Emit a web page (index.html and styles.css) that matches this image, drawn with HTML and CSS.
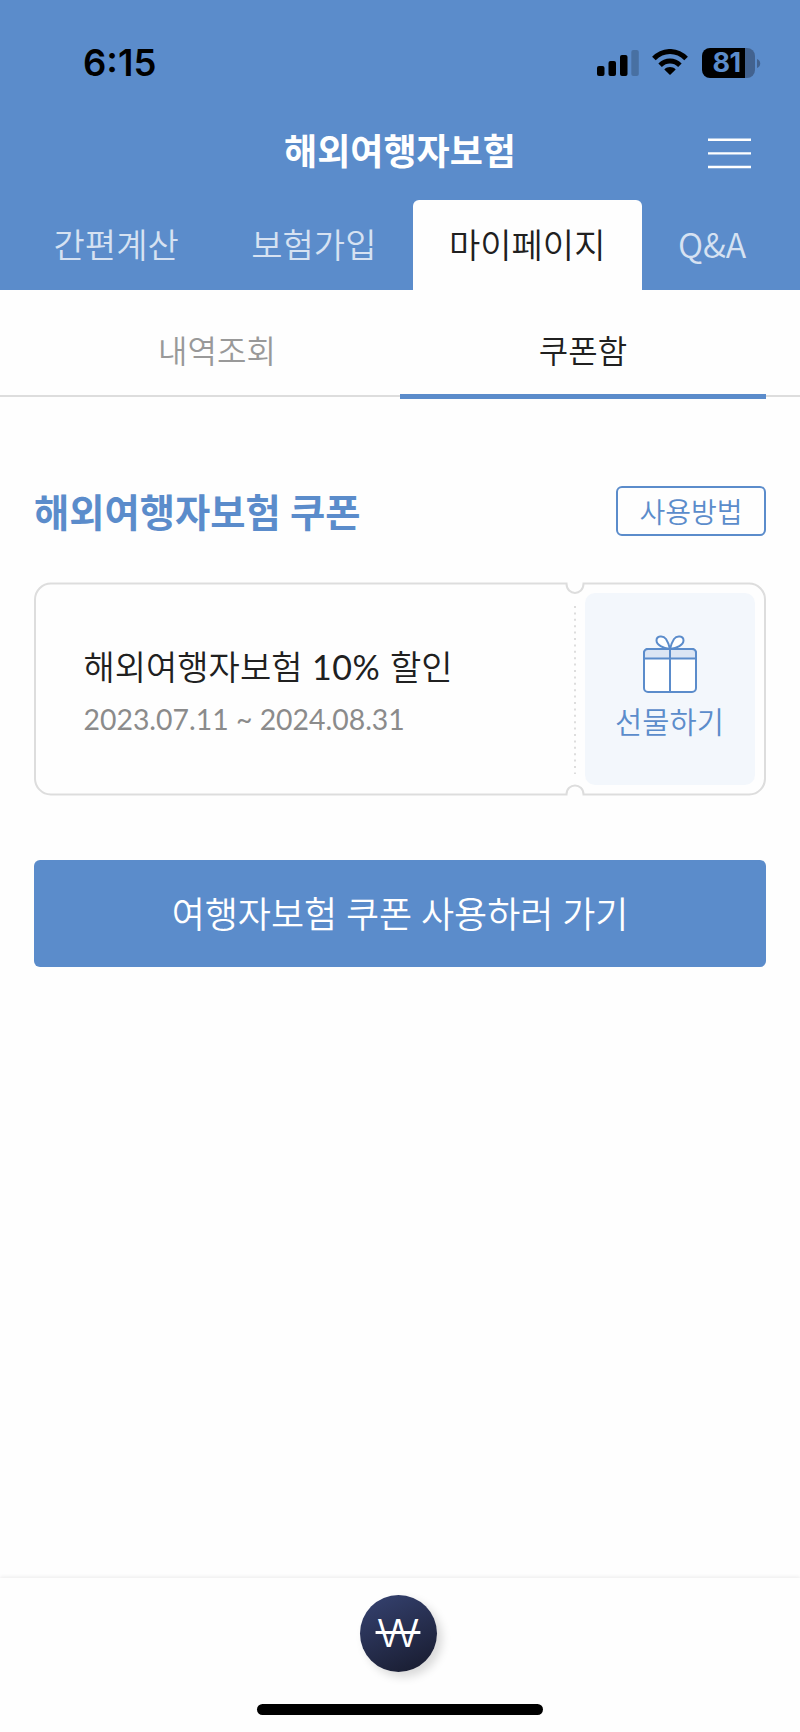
FILE: index.html
```html
<!DOCTYPE html>
<html lang="ko">
<head>
<meta charset="utf-8">
<title>해외여행자보험</title>
<link rel="stylesheet" href="styles.css">
</head>
<body>
<div class="screen">
  <header class="header">
    <div class="status">
      <span class="time">6:15</span>
      <div class="indicators">
        <svg class="signal" width="42" height="27" viewBox="0 0 42 27">
          <rect x="0" y="16" width="7.5" height="10" rx="2"/><rect x="11.5" y="11" width="7.5" height="15" rx="2"/><rect x="23" y="5" width="7.5" height="21" rx="2"/><rect x="34.3" y="0" width="7.5" height="26" rx="2" opacity=".2"/>
        </svg>
        <svg class="wifi" width="36" height="27" viewBox="0 0 36 27" fill="none" stroke="#000" stroke-width="5">
          <path d="M1.9 9.6C11 .1 25 .1 34.1 9.6"/><path d="M8.1 16.2c5.7-5.5 14.1-5.5 19.8 0"/><path d="M12.3 20.4C15.5 17.2 20.5 17.2 23.7 20.4L18 26.1Z" fill="#000" stroke="none"/>
        </svg>
        <div class="battery"><span class="level">81</span></div>
        <svg class="battery-cap" width="4" height="9" viewBox="0 0 4 9"><path d="M0 0Q3.2 1.4 3.2 4.5T0 9Z" fill="#42628f"/></svg>
      </div>
    </div>
    <div class="titlebar">
      <h1 class="title">해외여행자보험</h1>
      <svg class="menu" width="43" height="31" viewBox="0 0 43 31" stroke="#fff" stroke-width="2.4"><path d="M0 1.8H43M0 15.4H43M0 29H43"/></svg>
    </div>
    <nav class="tabs">
      <a class="tab">간편계산</a><a class="tab">보험가입</a><a class="tab active">마이페이지</a><a class="tab">Q&amp;A</a>
    </nav>
  </header>
  <nav class="subtabs">
    <a class="subtab">내역조회</a><a class="subtab current">쿠폰함</a>
  </nav>
  <main class="content">
    <div class="section-head">
      <h2 class="section-title">해외여행자보험 쿠폰</h2>
      <button class="howto">사용방법</button>
    </div>
    <article class="coupon">
      <svg class="outline" width="732" height="214" viewBox="0 0 732 214" fill="none" stroke="#ddd" stroke-width="2">
        <path d="M17 1.5H532.500C532.500 14 549.500 14 549.500 1.500H715A16 16 0 0 1 731 17.500V196A16 16 0 0 1 715 212.500H549.500C549.500 200.500 532.500 200.500 532.500 212.500H17A16 16 0 0 1 1 196V17.500A16 16 0 0 1 17 1.500Z"/>
        <path d="M541 24V192" stroke-dasharray="2 4.400"/>
      </svg>
      <div class="info">
        <p class="name">해외여행자보험 <span class="rate">10%</span> 할인</p>
        <p class="period">2023.07.11 ~ 2024.08.31</p>
      </div>
      <button class="gift">
        <svg width="54" height="58" viewBox="0 0 54 58" fill="#fff" stroke="#5b8ccb" stroke-width="2">
          <rect x="1" y="14" width="52" height="43" rx="4"/>
          <path d="M1 23.500V18a4 4 0 0 1 4-4H49a4 4 0 0 1 4 4V23.500Z" fill="#dbe5f4"/>
          <path d="M27 14C20 13 13.500 10 13.500 5.500C13.500 1 20 0 23 4C25 7 26 10 27 14C28 10 29 7 31 4C34 0 40.500 1 40.500 5.500C40.500 10 34 13 27 14V57"/>
        </svg>
        <span class="gift-label">선물하기</span>
      </button>
    </article>
    <button class="cta">여행자보험 쿠폰 사용하러 가기</button>
  </main>
  <footer class="footer">
    <div class="coin"><span class="won">W</span></div>
    <div class="home"></div>
  </footer>
</div>
</body>
</html>
```
FILE: styles.css
```css
* { box-sizing: border-box; margin: 0; padding: 0; }
body { background: #fefefe; font-family: Lato, "Noto Sans CJK KR", sans-serif; font-weight: 400; color: #202020; }
button { font: inherit; border: 0; background: none; }
svg { display: block; flex: none; }
.screen { width: 800px; height: 1732px; display: flex; flex-direction: column; overflow: hidden; }
.header { height: 290px; background: #5b8ccb; flex: none; display: flex; flex-direction: column; }
.status { height: 105px; padding: 42px 41px 0 83px; display: flex; justify-content: space-between; align-items: flex-start; }
.time { font: 600 36.5px/43px Inter, sans-serif; color: #000; }
.indicators { display: flex; align-items: flex-start; padding-top: 6px; }
.signal { margin: 2px 13px 0 0; }
.wifi { margin: 1px 14px 0 0; }
.battery { width: 53px; height: 30px; border-radius: 8px; background: linear-gradient(90deg, #000 43px, #42628f 43px); padding-left: 11px; }
.level { font: 700 27px/30px Inter, sans-serif; color: #5b8ccb; letter-spacing: -.5px; }
.battery-cap { margin: 11px -1.5px 0 2px; }
.titlebar { height: 95px; display: grid; grid-template-columns: 92px 1fr 92px; align-items: start; }
.title { grid-column: 2; text-align: center; color: #fff; font: 700 36px/52px "Noto Sans CJK KR", sans-serif; padding-top: 18px; }
.menu { margin-top: 33px; }
.tabs { display: flex; height: 90px; padding-left: 17.3px; }
.tab { padding: 0 36.3px; line-height: 88px; font-family: "Noto Sans CJK KR", sans-serif; font-weight: 350; font-size: 34px; color: #d6e2f2; white-space: nowrap; }
.tab.active { background: #fefefe; color: #202020; border-radius: 6px 6px 0 0; }
.subtabs { flex: none; height: 107px; padding: 0 34px; display: flex; border-bottom: 2px solid #ddd; }
.subtab { flex: 1; height: 109px; text-align: center; font-family: "Noto Sans CJK KR", sans-serif; font-weight: 350; font-size: 32px; line-height: 118px; color: #999; }
.subtab.current { color: #202020; border-bottom: 5px solid #5b8ccb; }
.content { flex: 1; padding: 89px 34px 0; }
.section-head { display: flex; justify-content: space-between; height: 50px; align-items: center; }
.section-title { font-size: 38.300px; line-height: 50px; font-weight: 700; color: #5b8ccb; padding-top: 2px; }
.howto { width: 150px; height: 50px; border: 2px solid #5b8ccb; border-radius: 6px; color: #5b8ccb; font-family: "Noto Sans CJK KR", sans-serif; font-weight: 350; font-size: 28px; line-height: 46px; }
.coupon { position: relative; margin-top: 46px; height: 214px; display: flex; justify-content: space-between; padding: 11px 11px 11px 49.5px; }
.outline { position: absolute; inset: 0; }
.info { padding-top: 47px; }
.name { font-size: 34px; line-height: 52px; font-family: "Noto Sans CJK KR", sans-serif; font-weight: 350; }
.rate { font-family: Lato, sans-serif; font-weight: 400; letter-spacing: .6px; }
.period { font-size: 28.4px; line-height: 40px; margin-top: 6px; color: #8b8b8b; }
.gift { width: 170px; height: 192px; background: #f3f7fc; border-radius: 10px; display: flex; flex-direction: column; align-items: center; padding-top: 42px; }
.gift-label { font-family: "Noto Sans CJK KR", sans-serif; font-weight: 350; font-size: 29.6px; line-height: 40px; color: #5b8ccb; margin: 8px 1px 0 0; }
.cta { margin-top: 64px; width: 732px; height: 107px; padding-bottom: 3px; border-radius: 6px; background: #5b8ccb; color: #fff; font-family: "Noto Sans CJK KR", sans-serif; font-weight: 350; font-size: 36px; line-height: 104px; letter-spacing: -.03px; word-spacing: -1.2px; }
.footer { flex: none; height: 154px; box-shadow: 0 -1px 4px rgba(0,0,0,.08); display: flex; flex-direction: column; align-items: center; padding-top: 17px; }
.coin { width: 77px; height: 77px; margin-right: 3px; border-radius: 50%; background: linear-gradient(155deg, #364372, #171a2c); box-shadow: 5px 5px 10px rgba(0,0,0,.15); color: #fff; display: flex; justify-content: center; }
.won { position: relative; font: 300 37.5px/77px Inter, sans-serif; transform: scaleX(1.18); }
.won::after { content: ""; position: absolute; left: 50%; top: 36px; width: 38px; height: 3px; margin-left: -19px; background: #fff; }
.home { margin-top: 32px; width: 286px; height: 11px; border-radius: 6px; background: #000; }
```
